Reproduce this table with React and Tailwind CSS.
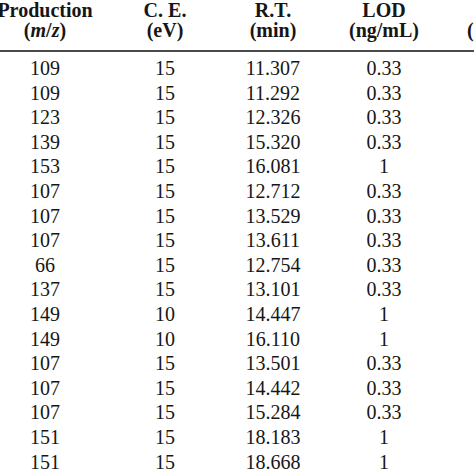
const rows = [
  ["109", "15", "11.307", "0.33"],
  ["109", "15", "11.292", "0.33"],
  ["123", "15", "12.326", "0.33"],
  ["139", "15", "15.320", "0.33"],
  ["153", "15", "16.081", "1"],
  ["107", "15", "12.712", "0.33"],
  ["107", "15", "13.529", "0.33"],
  ["107", "15", "13.611", "0.33"],
  ["66", "15", "12.754", "0.33"],
  ["137", "15", "13.101", "0.33"],
  ["149", "10", "14.447", "1"],
  ["149", "10", "16.110", "1"],
  ["107", "15", "13.501", "0.33"],
  ["107", "15", "14.442", "0.33"],
  ["107", "15", "15.284", "0.33"],
  ["151", "15", "18.183", "1"],
  ["151", "15", "18.668", "1"],
];

const cols = "grid grid-cols-[90px_150px_66px_156px_80px]";

function Cell({ children, className = "" }) {
  return (
    <div className={`flex justify-center whitespace-nowrap ${className}`}>
      {children}
    </div>
  );
}

export default function App() {
  return (
    <div className="w-[474px] h-[474px] overflow-hidden bg-white text-[#161616] font-['Liberation_Serif',serif] text-[20px]">
      {/* cabecera */}
      <div className={`${cols} font-bold leading-[20px]`}>
        <Cell className="flex-col items-center">
          <span>Production</span>
          <span>
            (<i>m</i>/<i>z</i>)
          </span>
        </Cell>
        <Cell className="flex-col items-center">
          <span>C. E.</span>
          <span>(eV)</span>
        </Cell>
        <Cell className="flex-col items-center">
          <span>R.T.</span>
          <span>(min)</span>
        </Cell>
        <Cell className="flex-col items-center">
          <span>LOD</span>
          <span>(ng/mL)</span>
        </Cell>
        <Cell className="flex-col items-center">
          <span>LOQ</span>
          <span>(ng/mL)</span>
        </Cell>
      </div>
      <div className="mt-[10px] h-[2px] bg-[#4a4a4a]" />

      {/* filas */}
      <div className="pt-[4px]">
        {rows.map((r, i) => (
          <div key={i} className={`${cols} h-[24.6px] leading-[24.6px]`}>
            <Cell>{r[0]}</Cell>
            <Cell>{r[1]}</Cell>
            <Cell>{r[2]}</Cell>
            <Cell>{r[3]}</Cell>
            <Cell>{r[3]}</Cell>
          </div>
        ))}
      </div>
    </div>
  );
}
